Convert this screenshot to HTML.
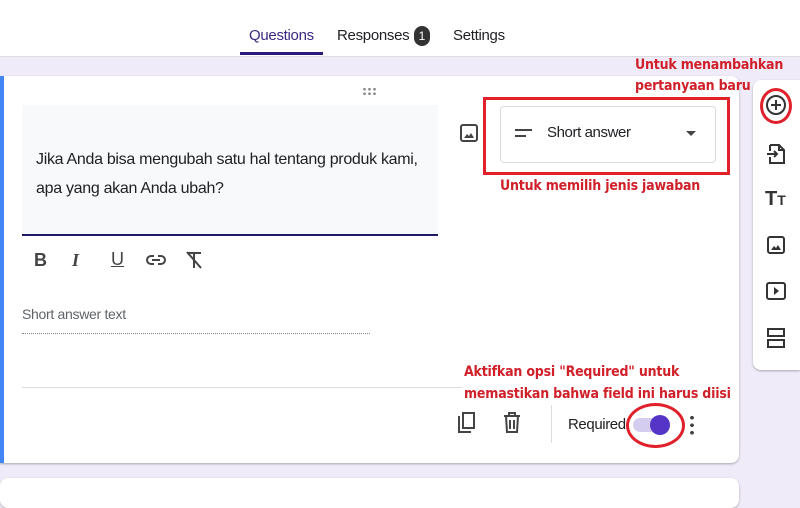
<!DOCTYPE html><html><head><style>
*{margin:0;padding:0;box-sizing:border-box}
body{width:800px;height:500px;overflow:hidden;background:#f0ebf8;font-family:"Liberation Sans",sans-serif;position:relative;color:#202124}
.a{position:absolute}
.red{color:#d0202a;font-weight:bold;font-size:14px;font-family:"DejaVu Sans Condensed","Liberation Sans",sans-serif;letter-spacing:-0.2px}
</style></head><body>
<div class="a" style="left:0;top:0;width:800px;height:57px;background:#fff;border-bottom:1px solid #dadce0"></div>
<div class="a" style="left:249px;top:27px;font-size:15px;color:#3c2a80;letter-spacing:-0.3px">Questions</div>
<div class="a" style="left:240px;top:52px;width:83px;height:3px;background:#2a1a7a"></div>
<div class="a" style="left:337px;top:27px;font-size:15px;letter-spacing:-0.3px">Responses</div>
<div class="a" style="left:414px;top:26px;width:16px;height:20px;border-radius:8px;background:#333;color:#fff;font-size:12px;text-align:center;line-height:20px">1</div>
<div class="a" style="left:453px;top:27px;font-size:15px;letter-spacing:-0.3px">Settings</div>

<div class="a" style="left:0;top:76px;width:739px;height:387px;background:#fff;border-radius:0 8px 8px 0;border-left:4px solid #4285f4;box-shadow:0 1px 2px rgba(0,0,0,.3)"></div>
<div class="a" style="left:0;top:478px;width:739px;height:30px;background:#fff;border-radius:8px;box-shadow:0 1px 2px rgba(0,0,0,.3)"></div>
<div class="a" style="left:362px;top:87px;width:14px;height:9px;background:radial-gradient(circle,#888 1.2px,transparent 1.5px) 0 0/5px 4.5px"></div>

<div class="a" style="left:22px;top:105px;width:416px;height:131px;background:#f8f9fa;border-bottom:2px solid #1f1a66"></div>
<div class="a" style="left:36px;top:145px;font-size:16px;line-height:29px;letter-spacing:-0.3px">Jika Anda bisa mengubah satu hal tentang produk kami,<br>apa yang akan Anda ubah?</div>

<svg class="a" style="left:459px;top:123px" width="20" height="20" viewBox="0 0 20 20"><rect x="2" y="2" width="16" height="16" rx="2" fill="none" stroke="#444" stroke-width="2"/><path d="M5 15l3-4 2 2 2-3 3 5z" fill="#444"/></svg>
<div class="a" style="left:483px;top:97px;width:247px;height:78px;border:3px solid #e0202a"></div>
<div class="a" style="left:500px;top:106px;width:216px;height:57px;border:1px solid #dadce0;border-radius:4px;background:#fff"></div>
<div class="a" style="left:515px;top:129px;width:17px;height:2px;background:#444"></div>
<div class="a" style="left:515px;top:135px;width:11px;height:2px;background:#444"></div>
<div class="a" style="left:547px;top:124px;font-size:15px;letter-spacing:-0.4px">Short answer</div>
<div class="a" style="left:686px;top:131px;border-left:5px solid transparent;border-right:5px solid transparent;border-top:5px solid #444"></div>
<div class="a red" style="left:500px;top:178px">Untuk memilih jenis jawaban</div>
<div class="a red" style="left:635px;top:55px;line-height:21px">Untuk menambahkan<br>pertanyaan baru</div>

<div class="a" style="left:753px;top:80px;width:47px;height:290px;background:#fff;border-radius:8px 0 0 8px;box-shadow:0 1px 2px rgba(0,0,0,.3)"></div>
<div class="a" style="left:760px;top:88px;width:32px;height:36px;border:3px solid #e0202a;border-radius:50%"></div>
<svg class="a" style="left:765px;top:94px" width="22" height="22" viewBox="0 0 22 22"><circle cx="11" cy="11" r="9" fill="none" stroke="#333" stroke-width="2"/><path d="M11 6v10M6 11h10" stroke="#333" stroke-width="2"/></svg>
<svg class="a" style="left:765px;top:143px" width="22" height="22" viewBox="0 0 22 22"><path d="M5 2h9l5 5v13H5v-6M5 8V2M14 2v5h5M2 11h10M9 8l3 3-3 3" fill="none" stroke="#333" stroke-width="2"/></svg>
<div class="a" style="left:765px;top:188px;font-size:20px;font-weight:bold;color:#333">T<span style="font-size:14px">T</span></div>
<svg class="a" style="left:766px;top:235px" width="20" height="20" viewBox="0 0 20 20"><rect x="2" y="2" width="16" height="16" rx="2" fill="none" stroke="#333" stroke-width="2"/><path d="M5 15l3-4 2 2 2-3 3 5z" fill="#333"/></svg>
<svg class="a" style="left:765px;top:281px" width="22" height="20" viewBox="0 0 22 20"><rect x="2" y="2" width="18" height="16" rx="2" fill="none" stroke="#333" stroke-width="2"/><path d="M9 6v8l5-4z" fill="#333"/></svg>
<svg class="a" style="left:766px;top:327px" width="20" height="22" viewBox="0 0 20 22"><rect x="2" y="2" width="16" height="7" fill="none" stroke="#333" stroke-width="2"/><rect x="2" y="13" width="16" height="7" fill="none" stroke="#333" stroke-width="2"/></svg>

<div class="a" style="left:34px;top:250px;font-size:18px;font-weight:bold;color:#444">B</div>
<div class="a" style="left:72px;top:250px;font-size:18px;font-style:italic;font-weight:bold;color:#444;font-family:'Liberation Serif',serif">I</div>
<div class="a" style="left:111px;top:249px;font-size:18px;color:#444;text-decoration:underline">U</div>
<svg class="a" style="left:146px;top:253px" width="20" height="14" viewBox="0 0 20 14"><path d="M8 3H5a4 4 0 000 8h3M12 3h3a4 4 0 010 8h-3M6 7h8" fill="none" stroke="#444" stroke-width="2"/></svg>
<svg class="a" style="left:184px;top:250px" width="20" height="20" viewBox="0 0 20 20"><path d="M3 3h14M10 3v15M3 2l14 16" fill="none" stroke="#444" stroke-width="2"/></svg>
<div class="a" style="left:22px;top:306px;font-size:14px;color:#5f6368;letter-spacing:-0.3px">Short answer text</div>
<div class="a" style="left:22px;top:333px;width:348px;border-top:1px dotted #888"></div>
<div class="a" style="left:22px;top:387px;width:440px;border-top:1px solid #dadce0"></div>
<div class="a red" style="left:464px;top:361px;line-height:22px">Aktifkan opsi "Required" untuk<br>memastikan bahwa field ini harus diisi</div>

<svg class="a" style="left:455px;top:411px" width="22" height="24" viewBox="0 0 22 24"><path d="M4 5v16h12" fill="none" stroke="#444" stroke-width="2"/><rect x="8" y="2" width="11" height="15" fill="none" stroke="#444" stroke-width="2"/></svg>
<svg class="a" style="left:502px;top:411px" width="20" height="24" viewBox="0 0 20 24"><path d="M2 5h16M7 5V2h6v3M4 5l1 16h10l1-16M8 9v9M12 9v9" fill="none" stroke="#444" stroke-width="2"/></svg>
<div class="a" style="left:551px;top:405px;width:1px;height:38px;background:#dadce0"></div>
<div class="a" style="left:568px;top:416px;font-size:15px;letter-spacing:-0.4px">Required</div>
<div class="a" style="left:633px;top:418px;width:36px;height:14px;border-radius:7px;background:#d4cdef"></div>
<div class="a" style="left:650px;top:415px;width:20px;height:20px;border-radius:50%;background:#5535c8"></div>
<div class="a" style="left:626px;top:403px;width:59px;height:45px;border:3px solid #e0202a;border-radius:50%"></div>
<div class="a" style="left:690px;top:414px;width:4px;height:22px;background:radial-gradient(circle,#444 1.8px,transparent 2px) 0 0/4px 7.5px"></div>
</body></html>
